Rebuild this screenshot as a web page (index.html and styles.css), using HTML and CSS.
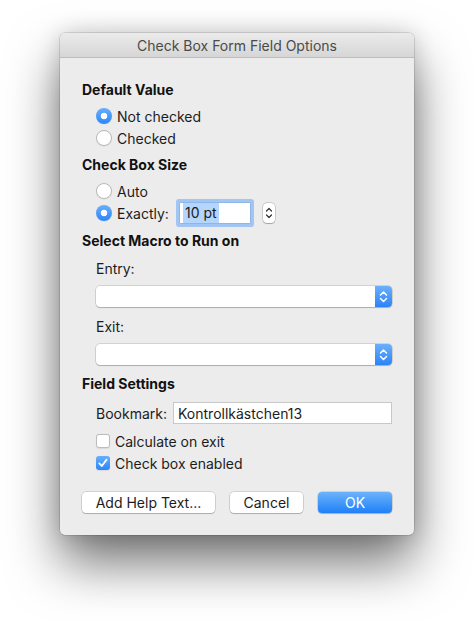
FILE: index.html
```html
<!DOCTYPE html>
<html lang="en">
<head>
<meta charset="utf-8">
<title>Check Box Form Field Options</title>
<link rel="stylesheet" href="styles.css">
</head>
<body>
<div class="window">
  <div class="titlebar">Check Box Form Field Options</div>
  <div class="content">
    <div class="heading h-first">Default Value</div>
    <div class="option radio-row r-first">
      <span class="radio on"></span><span>Not checked</span>
    </div>
    <div class="option radio-row">
      <span class="radio"></span><span>Checked</span>
    </div>

    <div class="heading h-size">Check Box Size</div>
    <div class="option radio-row r-auto">
      <span class="radio"></span><span>Auto</span>
    </div>
    <div class="option radio-row r-exact">
      <span class="radio on"></span><span class="exact-label">Exactly:</span>
      <span class="textfield focused"><span class="sel">10 pt</span></span>
      <span class="stepper">
        <svg width="12" height="20" viewBox="0 0 12 20"><path d="M3.5 8 L6 5.5 L8.5 8" fill="none" stroke="#333" stroke-width="1.2" stroke-linecap="round" stroke-linejoin="round"/><path d="M3.5 12 L6 14.5 L8.5 12" fill="none" stroke="#333" stroke-width="1.2" stroke-linecap="round" stroke-linejoin="round"/></svg>
      </span>
    </div>

    <div class="heading h-macro">Select Macro to Run on</div>
    <div class="sub label-entry">Entry:</div>
    <div class="popup">
      <span class="popup-arrows">
        <svg width="17" height="21" viewBox="0 0 17 21"><path d="M5.5 9 L8.5 6 L11.5 9" fill="none" stroke="#fff" stroke-width="1.5" stroke-linecap="round" stroke-linejoin="round"/><path d="M5.5 12.5 L8.5 15.5 L11.5 12.5" fill="none" stroke="#fff" stroke-width="1.5" stroke-linecap="round" stroke-linejoin="round"/></svg>
      </span>
    </div>
    <div class="sub label-exit">Exit:</div>
    <div class="popup">
      <span class="popup-arrows">
        <svg width="17" height="21" viewBox="0 0 17 21"><path d="M5.5 9 L8.5 6 L11.5 9" fill="none" stroke="#fff" stroke-width="1.5" stroke-linecap="round" stroke-linejoin="round"/><path d="M5.5 12.5 L8.5 15.5 L11.5 12.5" fill="none" stroke="#fff" stroke-width="1.5" stroke-linecap="round" stroke-linejoin="round"/></svg>
      </span>
    </div>

    <div class="heading h-field">Field Settings</div>
    <div class="bookmark-row">
      <span class="bm-label">Bookmark:</span>
      <span class="textfield wide">Kontrollkästchen13</span>
    </div>
    <div class="option check-row c-first">
      <span class="checkbox"></span><span>Calculate on exit</span>
    </div>
    <div class="option check-row">
      <span class="checkbox on">
        <svg width="14" height="14" viewBox="0 0 14 14"><path d="M3.3 7.4 L5.8 10 L10.6 3.6" fill="none" stroke="#fff" stroke-width="1.8" stroke-linecap="round" stroke-linejoin="round"/></svg>
      </span><span>Check box enabled</span>
    </div>

    <div class="buttons">
      <button class="btn btn-help">Add Help Text...</button>
      <button class="btn btn-cancel">Cancel</button>
      <button class="btn btn-ok">OK</button>
    </div>
  </div>
</div>
</body>
</html>
```

FILE: styles.css
```css
html, body {
  margin: 0;
  padding: 0;
  background: #ffffff;
}

body {
  font-family: Inter, "Noto Sans", "Liberation Sans", sans-serif;
  font-size: 14px;
  color: #1c1c1c;
  padding: 33px 0 0 60px;
  min-height: 100vh;
  box-sizing: border-box;
}

.window {
  width: 354px;
  height: 502px;
  box-sizing: border-box;
  background: #ececec;
  border-radius: 5px;
  box-shadow:
    0 0 0 0.5px rgba(0, 0, 0, 0.22),
    0 0 22px rgba(0, 0, 0, 0.16),
    0 28px 52px rgba(0, 0, 0, 0.55);
  display: flex;
  flex-direction: column;
  overflow: hidden;
}

.titlebar {
  height: 25px;
  flex: none;
  box-sizing: border-box;
  background: linear-gradient(#ebebeb, #d6d6d6);
  border-bottom: 1px solid #bdbdbd;
  text-align: center;
  line-height: 25px;
  font-size: 14px;
  color: #4a4a4a;
}

.content {
  display: flex;
  flex-direction: column;
  padding: 21px 22px 0 22px;
}

.heading {
  height: 22px;
  line-height: 22px;
  font-weight: 700;
  color: #111;
}

.h-size { margin-top: 5px; }
.h-macro { margin-top: 6px; }
.h-field { margin-top: 8px; }

.option {
  height: 22px;
  display: flex;
  align-items: center;
  padding-left: 14px;
}

.r-first { margin-top: 4px; }

.radio {
  width: 16px;
  height: 16px;
  box-sizing: border-box;
  border-radius: 50%;
  background: #fff;
  border: 1px solid #b9b9b9;
  margin-right: 5px;
  flex: none;
  box-shadow: 0 0.5px 1px rgba(0, 0, 0, 0.08);
}

.radio.on {
  border: none;
  background: radial-gradient(circle, #fff 0 3px, transparent 3.6px), linear-gradient(#6aaefc, #2b87f8);
}

.r-auto { margin-top: 4px; }

.exact-label {
  width: 62px;
}

.textfield {
  background: #fff;
  box-sizing: border-box;
  height: 22px;
  display: flex;
  align-items: center;
  border: 1px solid #c8c8c8;
  padding-left: 3px;
}

.textfield.focused {
  width: 72px;
  border: 1px solid #8fb6ea;
  box-shadow: 0 0 0 3px #a2c6f3;
  border-radius: 1px;
}

.sel {
  background: #b3d5fe;
  padding: 0 2px;
  line-height: 20px;
}

.stepper {
  margin-left: 12px;
  width: 12px;
  height: 20px;
  background: #fff;
  border-radius: 4px;
  box-shadow: 0 0 0 0.5px rgba(0, 0, 0, 0.25), 0 0.5px 1px rgba(0, 0, 0, 0.2);
  display: flex;
}

.sub {
  height: 22px;
  line-height: 22px;
  padding-left: 14px;
}

.label-entry { margin-top: 6px; }
.label-exit { margin-top: 9px; }

.popup {
  margin: 6px 0 0 14px;
  height: 21px;
  background: #fff;
  border-radius: 4px;
  box-shadow: 0 0 0 0.5px rgba(0, 0, 0, 0.22), 0 1px 1px rgba(0, 0, 0, 0.18);
  display: flex;
  justify-content: flex-end;
}

.popup-arrows {
  width: 17px;
  height: 21px;
  border-radius: 0 4px 4px 0;
  background: linear-gradient(#6cb0fb, #2a84f7);
  display: flex;
}

.bookmark-row {
  margin-top: 7px;
  padding-left: 14px;
  height: 22px;
  display: flex;
  align-items: center;
}

.bm-label {
  width: 77px;
}

.textfield.wide {
  flex: 1;
  padding-left: 4px;
}

.check-row {
  padding-left: 14px;
}

.c-first { margin-top: 6px; }

.checkbox {
  width: 14px;
  height: 14px;
  box-sizing: border-box;
  border-radius: 3px;
  background: #fff;
  border: 1px solid #bcbcbc;
  margin-right: 5px;
  flex: none;
  display: flex;
  box-shadow: 0 0.5px 1px rgba(0, 0, 0, 0.08);
}

.checkbox.on {
  border: none;
  background: linear-gradient(#6aaefc, #2b87f8);
}

.buttons {
  margin-top: 18px;
  display: flex;
  justify-content: flex-start;
}

.btn {
  font-family: inherit;
  font-size: 14px;
  height: 21px;
  padding: 0;
  border: none;
  border-radius: 4px;
  background: #fff;
  color: #1c1c1c;
  box-shadow: 0 0 0 0.5px rgba(0, 0, 0, 0.22), 0 1px 1px rgba(0, 0, 0, 0.18);
}

.btn-help { width: 133px; }
.btn-cancel { width: 73px; margin-left: 15px; }
.btn-ok {
  width: 74px;
  margin-left: 15px;
  color: #fff;
  background: linear-gradient(#6cb3fb, #1f80f8);
}
```
